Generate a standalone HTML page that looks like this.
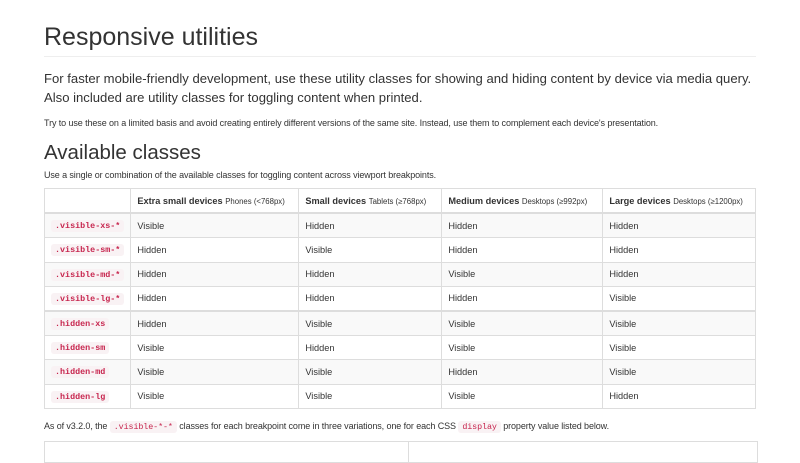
<!DOCTYPE html>
<html><head><style>
body{margin:0;background:#fff;font-family:"Liberation Sans",sans-serif;color:#333;width:800px;height:450px;overflow:hidden;position:relative}
.a{position:absolute;white-space:nowrap}
h1{position:absolute;left:44px;top:22px;margin:0;font-weight:400;font-size:25px;line-height:30px}
.hr{position:absolute;left:44px;width:712px;top:56px;border-top:1px solid #eee}
.lead{position:absolute;left:44px;top:69px;font-size:13.1px;line-height:19px;white-space:nowrap}
p{margin:0}
.s{font-size:9px;letter-spacing:-0.1px}
h2{position:absolute;left:44px;top:141px;margin:0;font-weight:400;font-size:20.5px;line-height:24px}
table{position:absolute;left:44px;top:188px;width:712px;border-collapse:collapse;font-size:9.2px}
td,th{border:1px solid #ddd;padding:0 6px;height:23.2px;text-align:left;vertical-align:middle;white-space:nowrap}
th{font-weight:700;border-bottom:2px solid #ddd}
th small{font-weight:400;font-size:7.8px}
tr:nth-child(odd) td{background:#f9f9f9}
tbody tr:nth-child(5) td{border-top:2px solid #ddd}
code{font-family:"Liberation Mono",monospace;color:#c7254e;background:#f9f2f4;padding:1px 4px;border-radius:3px;font-size:8.4px;white-space:nowrap}
td code{font-weight:700}
.t2{position:absolute;left:44px;top:441px;width:712px;height:20px;border:1px solid #ddd}
</style></head><body>
<h1>Responsive utilities</h1>
<div class="hr"></div>
<div class="lead">For faster mobile-friendly development, use these utility classes for showing and hiding content by device via media query.<br>Also included are utility classes for toggling content when printed.</div>
<div class="a s" style="left:44px;top:118px">Try to use these on a limited basis and avoid creating entirely different versions of the same site. Instead, use them to complement each device's presentation.</div>
<h2>Available classes</h2>
<div class="a s" style="left:44px;top:170px">Use a single or combination of the available classes for toggling content across viewport breakpoints.</div>
<table>
<colgroup><col style="width:85px"><col style="width:168px"><col style="width:143px"><col style="width:161px"><col></colgroup>
<thead><tr><th></th><th>Extra small devices <small>Phones (&lt;768px)</small></th><th>Small devices <small>Tablets (≥768px)</small></th><th>Medium devices <small>Desktops (≥992px)</small></th><th>Large devices <small>Desktops (≥1200px)</small></th></tr></thead>
<tbody>
<tr><td><code>.visible-xs-*</code></td><td>Visible</td><td>Hidden</td><td>Hidden</td><td>Hidden</td></tr>
<tr><td><code>.visible-sm-*</code></td><td>Hidden</td><td>Visible</td><td>Hidden</td><td>Hidden</td></tr>
<tr><td><code>.visible-md-*</code></td><td>Hidden</td><td>Hidden</td><td>Visible</td><td>Hidden</td></tr>
<tr><td><code>.visible-lg-*</code></td><td>Hidden</td><td>Hidden</td><td>Hidden</td><td>Visible</td></tr>
<tr><td><code>.hidden-xs</code></td><td>Hidden</td><td>Visible</td><td>Visible</td><td>Visible</td></tr>
<tr><td><code>.hidden-sm</code></td><td>Visible</td><td>Hidden</td><td>Visible</td><td>Visible</td></tr>
<tr><td><code>.hidden-md</code></td><td>Visible</td><td>Visible</td><td>Hidden</td><td>Visible</td></tr>
<tr><td><code>.hidden-lg</code></td><td>Visible</td><td>Visible</td><td>Visible</td><td>Hidden</td></tr>
</tbody></table>
<div class="a s" style="left:44px;top:421px">As of v3.2.0, the <code>.visible-*-*</code> classes for each breakpoint come in three variations, one for each CSS <code>display</code> property value listed below.</div>
<div class="t2"><div style="position:absolute;left:363px;top:0;bottom:0;border-left:1px solid #ddd"></div></div>
</body></html>
